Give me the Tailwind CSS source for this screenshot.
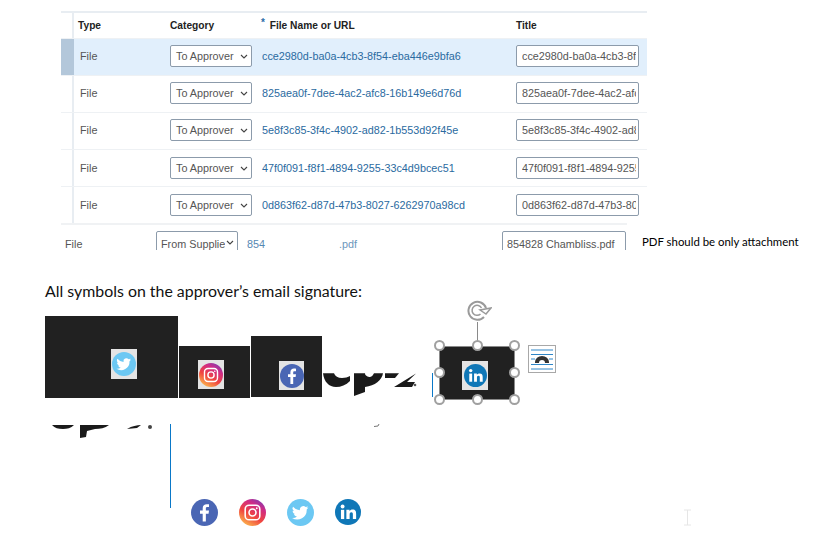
<!DOCTYPE html>
<html lang="en">
<head>
  <meta charset="UTF-8">
  <title>Attachments</title>
  <script src="https://cdn.jsdelivr.net/npm/@tailwindcss/browser@4"></script>
</head>
<body class="bg-white">
<div class="relative w-[826px] h-[541px] overflow-hidden font-['Liberation_Sans',sans-serif]">

  <!-- attachments table -->
  <div class="ml-[61px] pt-[11px] w-[586px] text-[10.8px] text-[#333]">
    <div class="border-t-2 border-[#e8edf2] h-[27px] flex font-bold text-[10.2px] text-[#222]">
      <div class="w-[13px] border-r-2 border-[#e8edf2]"></div>
      <div class="flex flex-1 items-center pl-[4px]">
        <div class="w-[92px]">Type</div>
        <div class="w-[91px]">Category</div>
        <div class="w-[255px]"><span class="text-[#2a6da8] align-top text-[10px] leading-[10px] mr-[2px]">*</span> File Name or URL</div>
        <div>Title</div>
      </div>
    </div>
    <!-- rows -->
    <div class="flex h-[37px] border-t border-[#eef1f4] bg-[#e1effc]">
      <div class="w-[13px] bg-[#b3c7da]"></div>
      <div class="flex flex-1 items-center pl-[6px] pb-[2px]">
        <div class="w-[90px] text-[#555]">File</div>
        <div class="w-[82px] h-[22px] flex items-center justify-between pl-[5px] pr-[3px] border border-[#8c9bab] rounded-[2px] bg-white text-[#555]">To Approver<svg width="8" height="5" viewBox="0 0 8 5"><path d="M1 1l3 3 3-3" fill="none" stroke="#444" stroke-width="1.1"/></svg></div>
        <div class="w-[264px] pl-[10px] text-[#2a6aa0] whitespace-nowrap">cce2980d-ba0a-4cb3-8f54-eba446e9bfa6</div>
        <div class="w-[123px] h-[22px] flex items-center pl-[5px] pr-[2px] border border-[#8c9bab] rounded-[2px] bg-white text-[#555]"><div class="overflow-hidden whitespace-nowrap">cce2980d-ba0a-4cb3-8f54</div></div>
      </div>
    </div>
    <div class="flex h-[37px] border-t border-[#eef1f4]">
      <div class="w-[13px] border-r-2 border-[#e8edf2]"></div>
      <div class="flex flex-1 items-center pl-[6px] pb-[2px]">
        <div class="w-[90px] text-[#555]">File</div>
        <div class="w-[82px] h-[22px] flex items-center justify-between pl-[5px] pr-[3px] border border-[#8c9bab] rounded-[2px] bg-white text-[#555]">To Approver<svg width="8" height="5" viewBox="0 0 8 5"><path d="M1 1l3 3 3-3" fill="none" stroke="#444" stroke-width="1.1"/></svg></div>
        <div class="w-[264px] pl-[10px] text-[#2a6aa0] whitespace-nowrap">825aea0f-7dee-4ac2-afc8-16b149e6d76d</div>
        <div class="w-[123px] h-[22px] flex items-center pl-[5px] pr-[2px] border border-[#8c9bab] rounded-[2px] bg-white text-[#555]"><div class="overflow-hidden whitespace-nowrap">825aea0f-7dee-4ac2-afc8</div></div>
      </div>
    </div>
    <div class="flex h-[37px] border-t border-[#eef1f4]">
      <div class="w-[13px] border-r-2 border-[#e8edf2]"></div>
      <div class="flex flex-1 items-center pl-[6px] pb-[2px]">
        <div class="w-[90px] text-[#555]">File</div>
        <div class="w-[82px] h-[22px] flex items-center justify-between pl-[5px] pr-[3px] border border-[#8c9bab] rounded-[2px] bg-white text-[#555]">To Approver<svg width="8" height="5" viewBox="0 0 8 5"><path d="M1 1l3 3 3-3" fill="none" stroke="#444" stroke-width="1.1"/></svg></div>
        <div class="w-[264px] pl-[10px] text-[#2a6aa0] whitespace-nowrap">5e8f3c85-3f4c-4902-ad82-1b553d92f45e</div>
        <div class="w-[123px] h-[22px] flex items-center pl-[5px] pr-[2px] border border-[#8c9bab] rounded-[2px] bg-white text-[#555]"><div class="overflow-hidden whitespace-nowrap">5e8f3c85-3f4c-4902-ad82</div></div>
      </div>
    </div>
    <div class="flex h-[37px] border-t border-[#eef1f4]">
      <div class="w-[13px] border-r-2 border-[#e8edf2]"></div>
      <div class="flex flex-1 items-center pl-[6px]">
        <div class="w-[90px] text-[#555]">File</div>
        <div class="w-[82px] h-[22px] flex items-center justify-between pl-[5px] pr-[3px] border border-[#8c9bab] rounded-[2px] bg-white text-[#555]">To Approver<svg width="8" height="5" viewBox="0 0 8 5"><path d="M1 1l3 3 3-3" fill="none" stroke="#444" stroke-width="1.1"/></svg></div>
        <div class="w-[264px] pl-[10px] text-[#2a6aa0] whitespace-nowrap">47f0f091-f8f1-4894-9255-33c4d9bcec51</div>
        <div class="w-[123px] h-[22px] flex items-center pl-[5px] pr-[2px] border border-[#8c9bab] rounded-[2px] bg-white text-[#555]"><div class="overflow-hidden whitespace-nowrap">47f0f091-f8f1-4894-9255</div></div>
      </div>
    </div>
    <div class="flex h-[37px] border-t border-[#eef1f4]">
      <div class="w-[13px] border-r-2 border-[#e8edf2]"></div>
      <div class="flex flex-1 items-center pl-[6px]">
        <div class="w-[90px] text-[#555]">File</div>
        <div class="w-[82px] h-[22px] flex items-center justify-between pl-[5px] pr-[3px] border border-[#8c9bab] rounded-[2px] bg-white text-[#555]">To Approver<svg width="8" height="5" viewBox="0 0 8 5"><path d="M1 1l3 3 3-3" fill="none" stroke="#444" stroke-width="1.1"/></svg></div>
        <div class="w-[264px] pl-[10px] text-[#2a6aa0] whitespace-nowrap">0d863f62-d87d-47b3-8027-6262970a98cd</div>
        <div class="w-[123px] h-[22px] flex items-center pl-[5px] pr-[2px] border border-[#8c9bab] rounded-[2px] bg-white text-[#555]"><div class="overflow-hidden whitespace-nowrap">0d863f62-d87d-47b3-8027</div></div>
      </div>
    </div>
  </div>

  <!-- pasted row, cut off at the bottom -->
  <div class="ml-[61px] w-[566px] border-t-2 border-[#f0f2f4] h-[27px] overflow-hidden text-[10.8px] flex items-start pt-[6px] pl-[4px] text-[#555]">
    <div class="w-[91px] pt-[5px]">File</div>
    <div class="w-[82px] h-[30px] shrink-0 flex items-start justify-between pt-[4px] pl-[4px] pr-[3px] border border-[#8c9bab] rounded-[2px] whitespace-nowrap overflow-hidden"><span class="w-[64px] overflow-hidden">From Supplier</span><svg class="mt-[4px] shrink-0" width="8" height="5" viewBox="0 0 8 5"><path d="M1 1l3 3 3-3" fill="none" stroke="#444" stroke-width="1.1"/></svg></div>
    <div class="w-[101px] pl-[9px] pt-[5px] text-[#2a6aa0] opacity-80">854</div>
    <div class="w-[163px] pt-[5px] text-[#2a6aa0] opacity-70">.pdf</div>
    <div class="w-[124px] h-[30px] shrink-0 pt-[4px] pl-[4px] border border-[#8c9bab] rounded-[2px] whitespace-nowrap">854828 Chambliss.pdf</div>
  </div>
  <div class="absolute left-[642px] top-[235px] text-[11.4px] leading-[14px] font-['Lato',sans-serif] text-black">PDF should be only attachment</div>

  <div class="absolute left-[45px] top-[281px] text-[15.9px] leading-[19px] font-['Lato',sans-serif] text-[#111]">All symbols on the approver’s email signature:</div>

  <!-- pasted images on the signature canvas -->
  <div class="absolute left-[45px] top-[316px] w-[133px] h-[82px] bg-[#212121]">
    <div class="absolute left-[66px] top-[33px] w-[26px] h-[30px] bg-[#e4e4e4] flex items-center justify-center">
      <svg width="24" height="24" viewBox="0 0 24 24"><circle cx="12" cy="12" r="12" fill="#6cc8f3"/><path d="M19 7.6c-.5.3-1.1.4-1.7.5.6-.4 1-.9 1.2-1.6-.6.3-1.200.6-1.900.7a3 3 0 0 0-5.100 2.700A8.400 8.400 0 0 1 5.400 6.800a3 3 0 0 0 .9 4c-.5 0-.9-.1-1.300-.4 0 1.500 1 2.700 2.400 3-.4.1-.9.1-1.300 0 .4 1.200 1.500 2 2.800 2.100A6 6 0 0 1 4.500 16.800 8.400 8.400 0 0 0 17.500 9.300c.6-.4 1.100-1 1.500-1.700z" fill="#fff"/></svg>
    </div>
  </div>
  <div class="absolute left-[179px] top-[346px] w-[71px] h-[52px] bg-[#212121]">
    <div class="absolute left-[19px] top-[14px] w-[26px] h-[29px] bg-[#e4e4e4] flex items-center justify-center">
      <svg width="24" height="24" viewBox="0 0 24 24"><defs><linearGradient id="ig1" x1="0.200" y1="1" x2="0.800" y2="0"><stop offset="0" stop-color="#fdc04f"/><stop offset="0.400" stop-color="#f0453f"/><stop offset="0.750" stop-color="#cf2b86"/><stop offset="1" stop-color="#7b3db5"/></linearGradient></defs><circle cx="12" cy="12" r="12" fill="url(#ig1)"/><rect x="5.500" y="5.500" width="13" height="13" rx="3.500" fill="none" stroke="#fff" stroke-width="1.400"/><circle cx="12" cy="12" r="3.100" fill="none" stroke="#fff" stroke-width="1.400"/><circle cx="15.800" cy="8.200" r=".8" fill="#fff"/></svg>
    </div>
  </div>
  <div class="absolute left-[251px] top-[336px] w-[71px] h-[61px] bg-[#212121]">
    <div class="absolute left-[28px] top-[25px] w-[25px] h-[29px] bg-[#e4e4e4] flex items-center justify-center">
      <svg width="24" height="24" viewBox="0 0 24 24"><circle cx="12" cy="12" r="12" fill="#4a66b4"/><path d="M13.200 20v-7h2.400l.4-2.800h-2.800V8.500c0-.8.300-1.300 1.400-1.300H16V4.700c-.3 0-1.100-.1-2-.1-2.100 0-3.600 1.300-3.600 3.600v2H8V13h2.400v7z" fill="#fff"/></svg>
    </div>
  </div>

  <!-- cropped logo strip -->
  <svg class="absolute left-[323px] top-[372px]" width="95" height="26" viewBox="0 0 95 26">
    <path d="M0 1.300H11C12 4.500 15 6 19 6C22 6 25 5 27 4V9C23 13 18 15 13 15C6 15 1 10 0 1.300Z" fill="#1a1a1a"/>
    <path d="M31 1.300H42C42 4 45 5 47 5C49 5 50 3 51 1.300H60C59 8 52 14 42 15V20L31 24Z" fill="#1a1a1a"/>
    <path d="M62 1.300H76L72 6H62Z" fill="#1a1a1a"/>
    <path d="M93 1.500L71 15H89L92 10H84Z" fill="#1a1a1a"/>
    <circle cx="92" cy="13" r="1.300" fill="#555"/>
  </svg>
  <div class="absolute left-[432px] top-[373px] w-[1px] h-[24px] bg-[#0a78c8]"></div>

  <!-- selected picture with handles -->
  <div class="absolute left-[439px] top-[346px] w-[76px] h-[54px] bg-[#212121] border border-[#8a8a8a]">
    <div class="absolute left-[22px] top-[14px] w-[26px] h-[29px] bg-[#e4e4e4] flex items-center justify-center">
      <svg width="23" height="23" viewBox="0 0 24 24"><circle cx="12" cy="12" r="12" fill="#0f77b7"/><rect x="5.500" y="10" width="3" height="8.500" fill="#fff"/><circle cx="7" cy="6.900" r="1.800" fill="#fff"/><path d="M10.500 10h2.900v1.300c.5-.9 1.500-1.500 2.900-1.500 2.600 0 3.200 1.700 3.200 4v4.700h-3v-4.200c0-1.100-.1-2.100-1.400-2.100s-1.600 1-1.600 2.100v4.200h-3z" fill="#fff"/></svg>
    </div>
  </div>
  <div class="absolute left-[477px] top-[322px] w-[1px] h-[24px] bg-[#8a8a8a]"></div>
  <svg class="absolute left-[466px] top-[300px]" width="26" height="23" viewBox="0 0 26 23">
    <path d="M20 8a9 9 0 1 0-2 9" fill="none" stroke="#9a9a9a" stroke-width="2"/>
    <path d="M15.500 8a5 5 0 1 0-1 6" fill="none" stroke="#9a9a9a" stroke-width="1.500"/>
    <path d="M14 10l6 4 5-6z" fill="none" stroke="#9a9a9a" stroke-width="1.500"/>
  </svg>
  <div class="absolute left-[434px] top-[340px] w-[11px] h-[11px] rounded-full bg-white border-2 border-[#a0a0a0]"></div>
  <div class="absolute left-[472px] top-[340px] w-[11px] h-[11px] rounded-full bg-white border-2 border-[#a0a0a0]"></div>
  <div class="absolute left-[509px] top-[340px] w-[11px] h-[11px] rounded-full bg-white border-2 border-[#a0a0a0]"></div>
  <div class="absolute left-[434px] top-[367px] w-[11px] h-[11px] rounded-full bg-white border-2 border-[#a0a0a0]"></div>
  <div class="absolute left-[509px] top-[367px] w-[11px] h-[11px] rounded-full bg-white border-2 border-[#a0a0a0]"></div>
  <div class="absolute left-[434px] top-[394px] w-[11px] h-[11px] rounded-full bg-white border-2 border-[#a0a0a0]"></div>
  <div class="absolute left-[472px] top-[394px] w-[11px] h-[11px] rounded-full bg-white border-2 border-[#a0a0a0]"></div>
  <div class="absolute left-[509px] top-[394px] w-[11px] h-[11px] rounded-full bg-white border-2 border-[#a0a0a0]"></div>

  <!-- layout options button -->
  <svg class="absolute left-[528px] top-[345px]" width="28" height="28" viewBox="0 0 28 28">
    <rect x=".5" y=".5" width="27" height="27" fill="#fff" stroke="#a8a8a8"/>
    <path d="M3 5h22M3 9.500h22M3 14h4M21 14h4M3 19.500h22M3 24h22" stroke="#2e86c8" stroke-width="1"/>
    <path d="M7 18v-1a7 6 0 0 1 14 0v1h-4a3 3 0 0 0-6 0z" fill="#333"/>
  </svg>

  <!-- bottom half of the logo -->
  <svg class="absolute left-[50px] top-[424px]" width="105" height="14" viewBox="0 0 105 14">
    <path d="M2 1h22c-3 3-7 4-11 4-5 0-8-1-11-4z" fill="#1a1a1a"/>
    <path d="M30 1h29c-4 3-9 4-14 4l-8 2-1 6-6 1z" fill="#1a1a1a"/>
    <path d="M77 5c5-3 10-4 14-4l-4 3z" fill="#1a1a1a"/>
    <circle cx="100" cy="3" r="2" fill="#444"/>
  </svg>
  <svg class="absolute left-[373px] top-[423px]" width="8" height="5" viewBox="0 0 8 5"><path d="M1 3.500l4-.5 1-2" fill="none" stroke="#777"/></svg>
  <div class="absolute left-[170px] top-[424px] w-[1px] h-[84px] bg-[#0a78c8]"></div>

  <!-- signature icons -->
  <div class="absolute left-[191px] top-[499px] flex gap-[21px]">
    <svg width="27" height="27" viewBox="0 0 24 24"><circle cx="12" cy="12" r="12" fill="#4a66b4"/><path d="M13.200 20v-7h2.400l.4-2.800h-2.800V8.500c0-.8.300-1.300 1.400-1.300H16V4.700c-.3 0-1.100-.1-2-.1-2.100 0-3.600 1.300-3.600 3.600v2H8V13h2.400v7z" fill="#fff"/></svg>
    <svg width="27" height="27" viewBox="0 0 24 24"><defs><linearGradient id="ig2" x1="0.200" y1="1" x2="0.800" y2="0"><stop offset="0" stop-color="#fdc04f"/><stop offset="0.400" stop-color="#f0453f"/><stop offset="0.750" stop-color="#cf2b86"/><stop offset="1" stop-color="#7b3db5"/></linearGradient></defs><circle cx="12" cy="12" r="12" fill="url(#ig2)"/><rect x="5.500" y="5.500" width="13" height="13" rx="3.500" fill="none" stroke="#fff" stroke-width="1.400"/><circle cx="12" cy="12" r="3.100" fill="none" stroke="#fff" stroke-width="1.400"/><circle cx="15.800" cy="8.200" r=".8" fill="#fff"/></svg>
    <svg width="27" height="27" viewBox="0 0 24 24"><circle cx="12" cy="12" r="12" fill="#6cc8f3"/><path d="M19 7.600c-.5.3-1.100.4-1.700.5.600-.4 1-.9 1.200-1.600-.6.300-1.200.6-1.900.7a3 3 0 0 0-5.100 2.700A8.400 8.400 0 0 1 5.400 6.800a3 3 0 0 0 .9 4c-.5 0-.9-.1-1.300-.4 0 1.500 1 2.700 2.400 3-.4.1-.9.1-1.300 0 .4 1.200 1.500 2 2.800 2.100A6 6 0 0 1 4.500 16.800 8.400 8.400 0 0 0 17.500 9.300c.6-.4 1.100-1 1.500-1.700z" fill="#fff"/></svg>
    <svg width="26" height="26" viewBox="0 0 24 24"><circle cx="12" cy="12" r="12" fill="#0f77b7"/><rect x="5.500" y="10" width="3" height="8.500" fill="#fff"/><circle cx="7" cy="6.900" r="1.800" fill="#fff"/><path d="M10.500 10h2.900v1.300c.5-.9 1.500-1.500 2.900-1.500 2.600 0 3.200 1.700 3.200 4v4.700h-3v-4.200c0-1.100-.1-2.100-1.400-2.100s-1.600 1-1.600 2.100v4.200h-3z" fill="#fff"/></svg>
  </div>

  <!-- stray text cursor mark -->
  <svg class="absolute left-[684px] top-[509px]" width="8" height="17" viewBox="0 0 8 17"><path d="M0 1h7M3.500 1v15M0 16h7" fill="none" stroke="#e6e6e6"/></svg>
</div>
</body>
</html>
